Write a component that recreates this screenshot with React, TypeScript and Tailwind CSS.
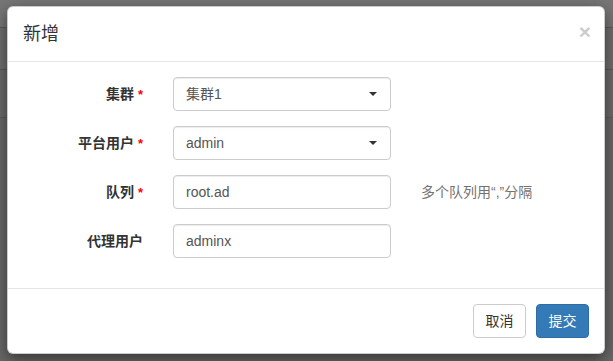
const FONT = "font-['Helvetica_Neue','Liberation_Sans','Noto_Sans_CJK_SC',sans-serif]";

type Field = {
  label: string;
  required?: boolean;
  value: string;
  select?: boolean;
  help?: string;
};

const FIELDS: Field[] = [
  { label: "集群", required: true, value: "集群1", select: true },
  { label: "平台用户", required: true, value: "admin", select: true },
  { label: "队列", required: true, value: "root.ad", help: "多个队列用“,”分隔" },
  { label: "代理用户", value: "adminx" },
];

function FormRow({ field }: { field: Field }) {
  return (
    <div className="flex items-start mb-[15px]">
      <label className="w-[120px] shrink-0 text-right pt-[7px] text-[14px] leading-[20px] font-bold text-[#333]">
        {field.label}
        {field.required && <span className="text-[#f00] text-[13px] ml-[4px] font-bold">*</span>}
      </label>
      <div className="ml-[30px] w-[218px] h-[34px] shrink-0 flex items-center justify-between border border-[#ccc] rounded-[4px] bg-white px-[12px] shadow-[inset_0_1px_1px_rgba(0,0,0,0.075)]">
        <span className="text-[14px] text-[#555] leading-[20px]">{field.value}</span>
        {field.select && (
          <span className="mr-[1px] w-0 h-0 border-l-[4px] border-r-[4px] border-t-[4px] border-l-transparent border-r-transparent border-t-[#333]" />
        )}
      </div>
      {field.help && (
        <div className="ml-[30px] pt-[7px] text-[14px] leading-[20px] text-[#737373]">{field.help}</div>
      )}
    </div>
  );
}

export default function App() {
  return (
    <div className={`relative w-[613px] h-[361px] overflow-hidden bg-[#686868] ${FONT}`}>
      {/* page behind the overlay */}
      <div className="h-[27px] bg-[#767676]" />
      <div className="h-px bg-[#5a5a5a]" />
      <div className="h-[41px] bg-[#6e6e6e]" />
      <div className="h-px bg-[#5a5a5a]" />
      <div className="h-[47px] bg-[#6b6b6b]" />
      <div className="h-px bg-[#5c5c5c]" />

      {/* modal */}
      <div className="absolute left-[7px] top-[6px] w-[598px] bg-white rounded-[6px] border border-black/20 shadow-[0_5px_15px_rgba(0,0,0,0.5)]">
        <div className="flex items-center justify-between px-[15px] py-[15px] border-b border-[#e5e5e5]">
          <h4 className="text-[18px] leading-[24px] text-[#333]">新增</h4>
          <span className="text-[21px] font-bold leading-none text-black opacity-20 -mt-[5px] -mr-[2px]">×</span>
        </div>
        <div className="px-[15px] pt-[15px] pb-[15px]">
          {FIELDS.map((f) => (
            <FormRow key={f.label} field={f} />
          ))}
        </div>
        <div className="flex justify-end gap-[10px] p-[15px] border-t border-[#e5e5e5]">
          <button className="w-[53px] h-[34px] text-[14px] text-[#333] bg-white border border-[#ccc] rounded-[4px]">
            取消
          </button>
          <button className="w-[53px] h-[34px] text-[14px] text-white bg-[#337ab7] border border-[#2e6da4] rounded-[4px]">
            提交
          </button>
        </div>
      </div>
    </div>
  );
}
